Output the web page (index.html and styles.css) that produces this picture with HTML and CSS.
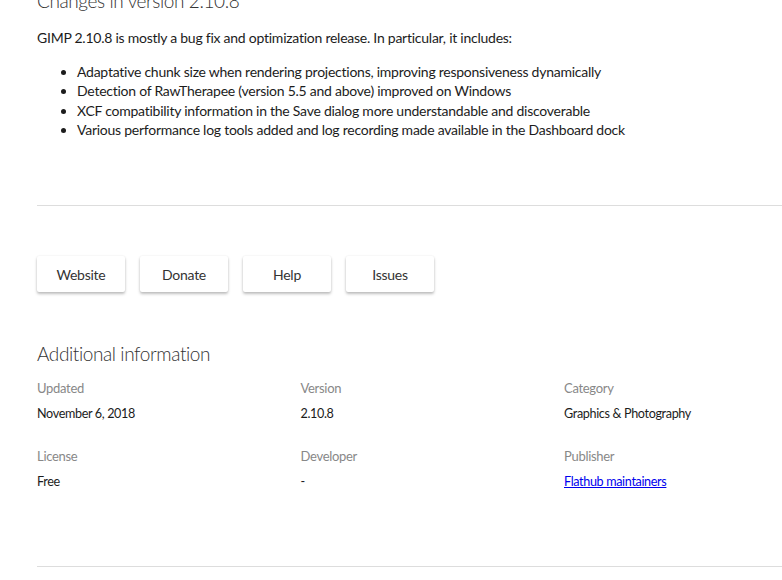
FILE: index.html
```html
<!DOCTYPE html>
<html>
<head>
<meta charset="utf-8">
<link rel="stylesheet" href="styles.css">
</head>
<body>
<main class="page">
  <section class="changes">
    <h2 class="section-title">Changes in version 2.10.8</h2>
    <p class="intro">GIMP 2.10.8 is mostly a bug fix and optimization release. In particular, it includes:</p>
    <ul class="change-list">
      <li>Adaptative chunk size when rendering projections, improving responsiveness dynamically</li>
      <li>Detection of RawTherapee (version 5.5 and above) improved on Windows</li>
      <li>XCF compatibility information in the Save dialog more understandable and discoverable</li>
      <li>Various performance log tools added and log recording made available in the Dashboard dock</li>
    </ul>
  </section>
  <hr class="divider">
  <div class="links">
    <a class="link-btn">Website</a>
    <a class="link-btn">Donate</a>
    <a class="link-btn">Help</a>
    <a class="link-btn">Issues</a>
  </div>
  <section class="info">
    <h2 class="section-title">Additional information</h2>
    <div class="info-grid">
      <div class="info-item"><div class="label">Updated</div><div class="value">November 6, 2018</div></div>
      <div class="info-item"><div class="label">Version</div><div class="value">2.10.8</div></div>
      <div class="info-item"><div class="label">Category</div><div class="value">Graphics &amp; Photography</div></div>
      <div class="info-item"><div class="label">License</div><div class="value">Free</div></div>
      <div class="info-item"><div class="label">Developer</div><div class="value">-</div></div>
      <div class="info-item"><div class="label">Publisher</div><div class="value"><a class="pub-link" href="#">Flathub maintainers</a></div></div>
    </div>
  </section>
  <hr class="divider divider-end">
</main>
</body>
</html>
```
FILE: styles.css
```css
html, body {
  margin: 0;
  padding: 0;
  background: #fff;
  overflow: hidden;
}
body {
  font-family: Lato, "Noto Sans", sans-serif;
  font-size: 14px;
  letter-spacing: -0.25px;
  color: #1c1c1c;
}
.page {
  width: 790px;
  margin-left: 37px;
  margin-top: -14px;
}
.section-title {
  font-size: 19px;
  letter-spacing: -0.4px;
  font-weight: 300;
  color: #333;
  line-height: 30px;
  margin: 0;
}
.intro {
  margin: 12px 0 0;
  line-height: 19px;
}
.change-list {
  margin: 15px 0 0;
  padding-left: 40px;
  line-height: 19.3px;
}
.divider {
  border: 0;
  border-top: 1px solid #ddd;
  margin: 66px 0 0;
  height: 0;
}
.links {
  display: flex;
  gap: 15px;
  margin-top: 50px;
}
.link-btn {
  width: 88px;
  height: 36px;
  display: flex;
  align-items: center;
  justify-content: center;
  background: #fff;
  color: #333;
  border-radius: 2px;
  box-shadow: 0 2px 3px rgba(0,0,0,0.25), 0 0 2px rgba(0,0,0,0.08);
}
.info {
  margin-top: 47px;
}
.info-grid {
  display: grid;
  grid-template-columns: repeat(3, 263.5px);
  row-gap: 22px;
  margin-top: 9px;
}
.label {
  color: #888;
  line-height: 20px;
  font-size: 13px;
  letter-spacing: -0.3px;
}
.value {
  margin-top: 6px;
  line-height: 20px;
  font-size: 12.6px;
  letter-spacing: -0.35px;
}
.pub-link {
  color: #0000ee;
}
.divider-end {
  margin-top: 74px;
}
```
